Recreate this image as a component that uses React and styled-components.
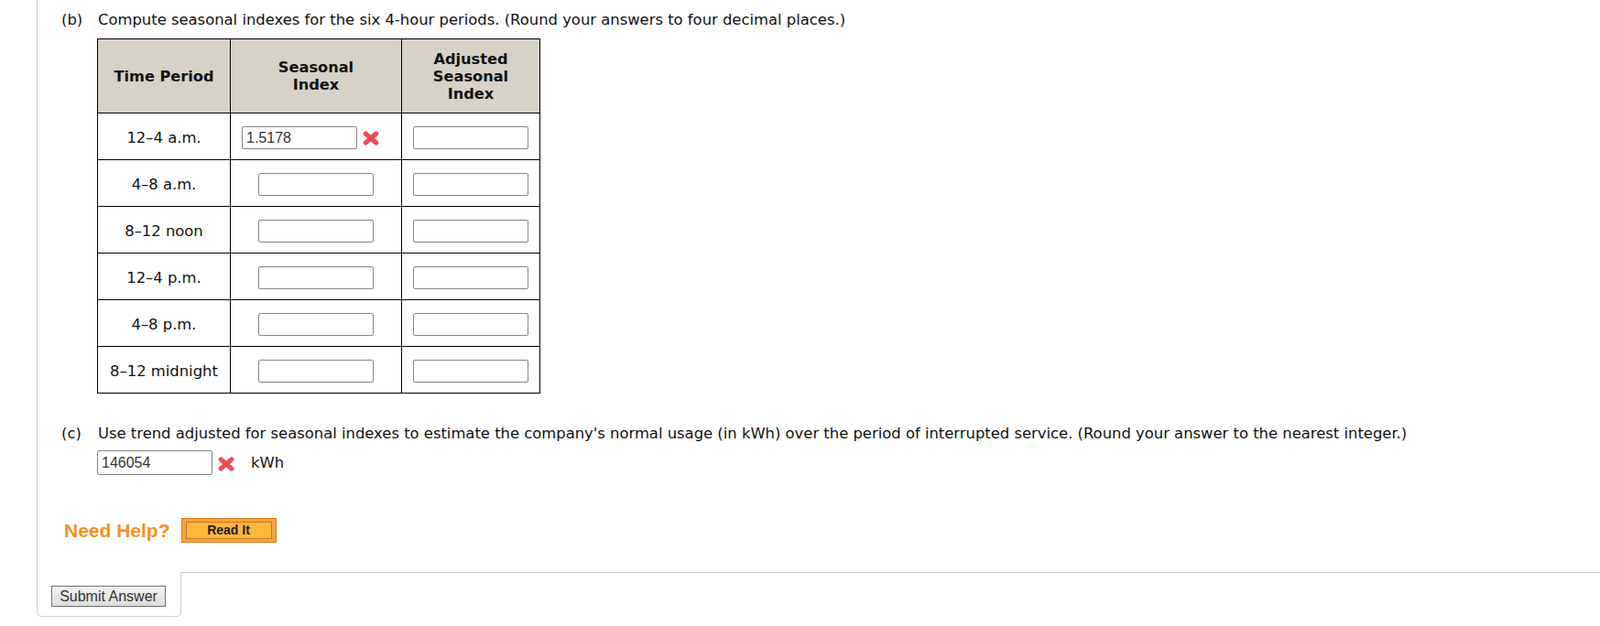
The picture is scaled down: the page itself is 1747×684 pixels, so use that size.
import React from 'react';
import styled, { createGlobalStyle } from 'styled-components';

const GlobalStyle = createGlobalStyle`
  html, body {
    margin: 0;
    padding: 0;
    background: #fff;
  }
  body {
    font-family: "DejaVu Sans", Verdana, sans-serif;
    font-size: 16.4px;
    color: #111;
  }
`;

const Page = styled.div`
  padding-left: 40px;
  width: 1707px;
`;

const Panel = styled.div`
  border-left: 1px solid #cfcfcf;
  padding: 12px 0 32px 26px;
`;

const PartLine = styled.div`
  display: flex;
  line-height: 20px;
  margin-top: ${p => p.$top || 0}px;
`;

const PartLabel = styled.span`
  width: 40px;
  flex-shrink: 0;
`;

const Indent = styled.div`
  margin-left: 39px;
  margin-top: ${p => p.$top || 0}px;
`;

const Table = styled.table`
  border-collapse: collapse;
  text-align: center;
`;

const HeadCell = styled.th`
  background: #d6d2c8;
  border: 1px solid #000;
  height: 81px;
  width: ${p => p.$w}px;
  padding: 0 6px;
  box-sizing: border-box;
  font-size: 16.2px;
  font-weight: bold;
  line-height: 19px;
  color: #111;
`;

const Cell = styled.td`
  border: 1px solid #000;
  height: 48px;
  padding: 2px 0 0;
  vertical-align: middle;
  white-space: nowrap;
`;

const Field = styled.div`
  display: flex;
  align-items: center;
  justify-content: ${p => (p.$start ? 'flex-start' : 'center')};
`;

const AnswerInput = styled.input`
  width: 126px;
  height: ${p => p.$h || 25}px;
  box-sizing: border-box;
  border: 1px solid #858585;
  border-radius: 2px;
  padding: 1px 4px 0;
  font-family: "Liberation Sans", Arial, sans-serif;
  font-size: 16px;
  color: #333;
  background: #fff;
  outline: none;
`;

const Wrong = styled.span`
  display: inline-flex;
  margin: 2px 12px 0 6px;
`;

const Unit = styled.span`
  margin-left: 6px;
`;

const HelpRow = styled.div`
  display: flex;
  align-items: center;
  margin: 47px 0 0 3px;
`;

const HelpText = styled.span`
  font-family: "Liberation Sans", Arial, sans-serif;
  font-size: 21px;
  font-weight: bold;
  color: #f5901e;
  margin-right: 12px;
`;

const ReadIt = styled.button`
  display: inline-flex;
  padding: 3px 4px;
  background: #f6a43a;
  border: 1px solid #d8791d;
  cursor: pointer;
`;

const ReadItFace = styled.span`
  display: block;
  width: 92px;
  height: 17px;
  line-height: 17px;
  border: 1px solid #c9791f;
  background: #fdb840;
  font-family: "Liberation Sans", Arial, sans-serif;
  font-size: 14px;
  font-weight: bold;
  color: #222;
`;

const Footer = styled.div`
  display: flex;
`;

const Tab = styled.div`
  width: 158px;
  height: 49px;
  border: 1px solid #cfcfcf;
  border-top: none;
  border-radius: 0 0 5px 5px;
  padding: 15px 0 0 15px;
  box-sizing: border-box;
  flex-shrink: 0;
`;

const Rest = styled.div`
  flex: 1;
  border-top: 1px solid #cfcfcf;
`;

const SubmitButton = styled.button`
  width: 125px;
  height: 23px;
  padding: 0;
  border: 1px solid #707070;
  background: linear-gradient(#f2f2f2, #dddddd);
  font-family: "Liberation Sans", Arial, sans-serif;
  font-size: 16px;
  color: #333;
  cursor: pointer;
`;

const XMark = () => (
  <svg width="18" height="16" viewBox="0 0 18 16">
    <g stroke="#ec4b56" strokeWidth="5" strokeLinecap="round">
      <line x1="3.2" y1="3" x2="14.8" y2="13" />
      <line x1="14.8" y1="3" x2="3.2" y2="13" />
    </g>
  </svg>
);

const rows = [
  { period: '12–4 a.m.', seasonal: '1.5178', wrong: true },
  { period: '4–8 a.m.' },
  { period: '8–12 noon' },
  { period: '12–4 p.m.' },
  { period: '4–8 p.m.' },
  { period: '8–12 midnight' },
];

export default function App() {
  return (
    <>
      <GlobalStyle />
      <Page>
        <Panel>
          <PartLine>
            <PartLabel>(b)</PartLabel>
            <span>Compute seasonal indexes for the six 4-hour periods. (Round your answers to four decimal places.)</span>
          </PartLine>
          <Indent $top={10}>
            <Table>
              <thead>
                <tr>
                  <HeadCell $w={145}>Time Period</HeadCell>
                  <HeadCell $w={187}>Seasonal<br />Index</HeadCell>
                  <HeadCell $w={151}>Adjusted<br />Seasonal<br />Index</HeadCell>
                </tr>
              </thead>
              <tbody>
                {rows.map(r => (
                  <tr key={r.period}>
                    <Cell>{r.period}</Cell>
                    <Cell>
                      <Field>
                        <AnswerInput defaultValue={r.seasonal || ''} />
                        {r.wrong && (
                          <Wrong><XMark /></Wrong>
                        )}
                      </Field>
                    </Cell>
                    <Cell>
                      <Field>
                        <AnswerInput />
                      </Field>
                    </Cell>
                  </tr>
                ))}
              </tbody>
            </Table>
          </Indent>

          <PartLine $top={34}>
            <PartLabel>(c)</PartLabel>
            <span>Use trend adjusted for seasonal indexes to estimate the company's normal usage (in kWh) over the period of interrupted service. (Round your answer to the nearest integer.)</span>
          </PartLine>
          <Indent $top={8}>
            <Field $start>
              <AnswerInput $h={27} defaultValue="146054" />
              <Wrong><XMark /></Wrong>
              <Unit>kWh</Unit>
            </Field>
          </Indent>

          <HelpRow>
            <HelpText>Need Help?</HelpText>
            <ReadIt>
              <ReadItFace>Read It</ReadItFace>
            </ReadIt>
          </HelpRow>
        </Panel>
        <Footer>
          <Tab>
            <SubmitButton>Submit Answer</SubmitButton>
          </Tab>
          <Rest />
        </Footer>
      </Page>
    </>
  );
}
